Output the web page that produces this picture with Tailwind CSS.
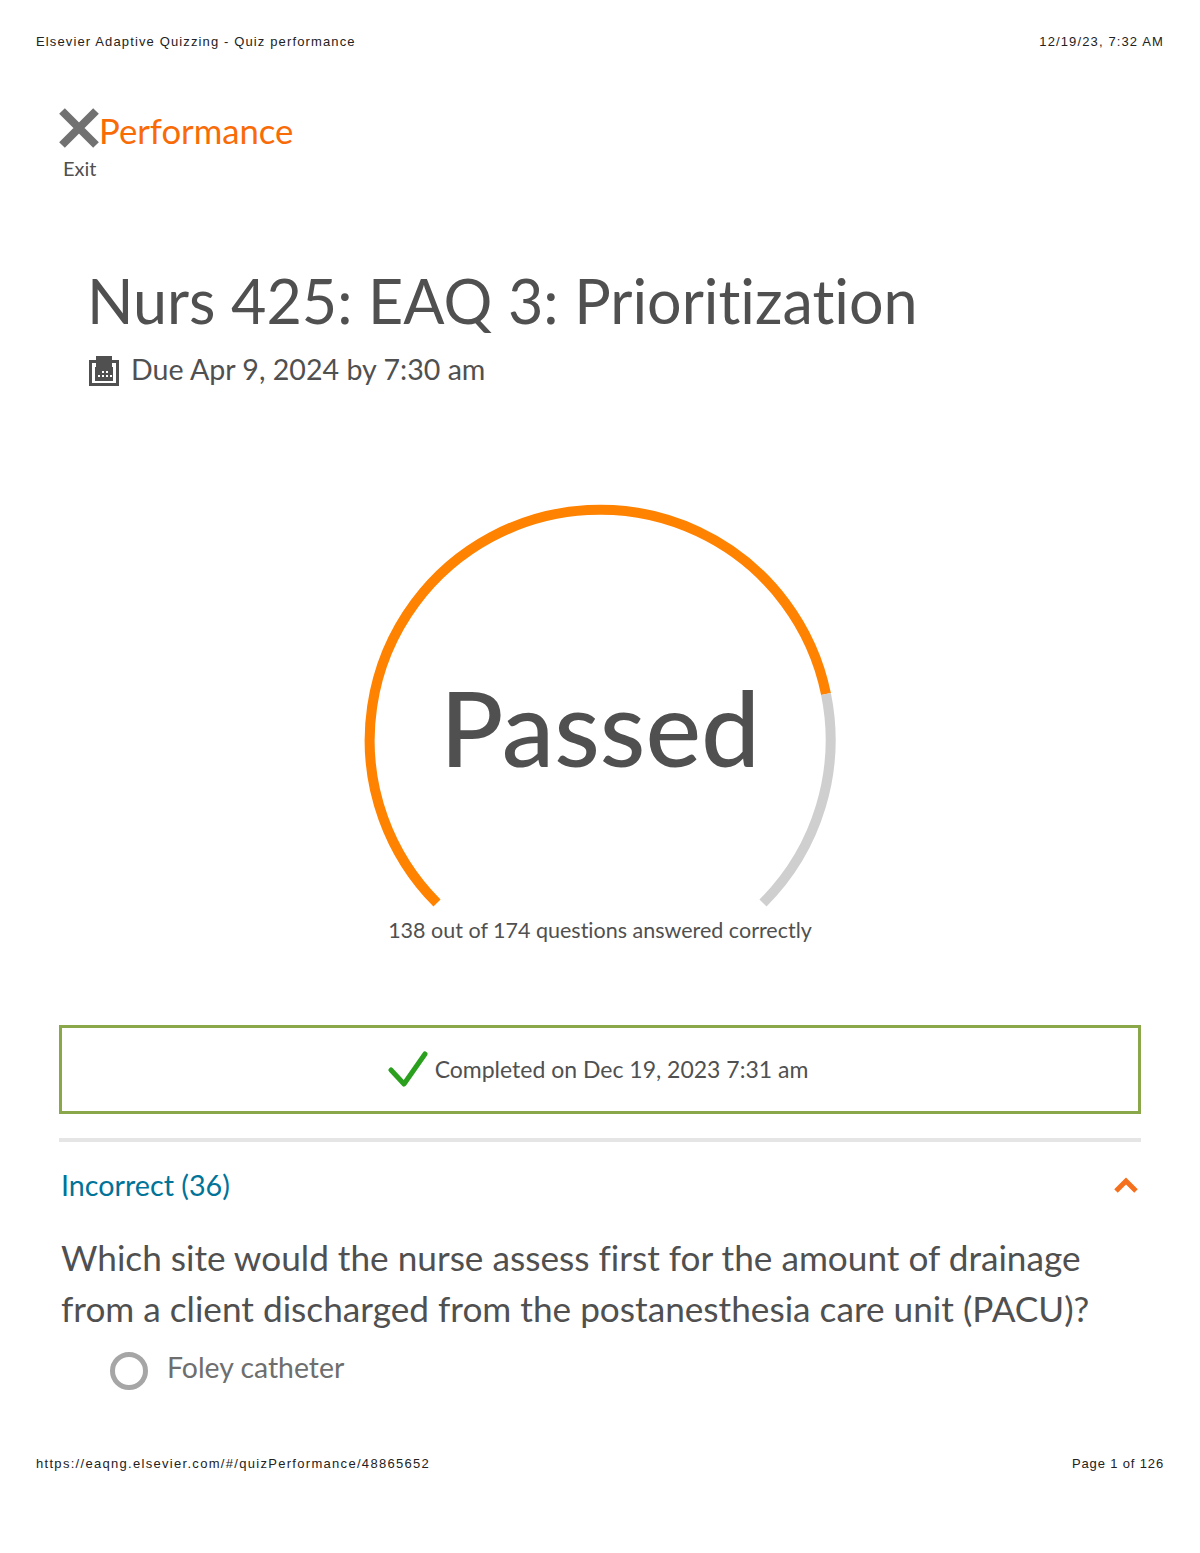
<!DOCTYPE html>
<html lang="en">
  <head>
    <meta charset="UTF-8" />
    <title>Elsevier Adaptive Quizzing - Quiz performance</title>
    <script src="https://cdn.jsdelivr.net/npm/@tailwindcss/browser@4"></script>
  </head>
  <body class="bg-white text-[#505050] font-['Lato','Liberation_Sans',sans-serif] [font-variant-ligatures:none]">
    <div class="h-[1553px] w-[1200px] overflow-hidden flex flex-col">
      <!-- print header -->
      <div class="flex justify-between px-[36px] pt-[34px] h-[108px] text-[13px] leading-[16px] text-[#222] font-['Liberation_Sans',sans-serif] tracking-[1.13px]">
        <span>Elsevier Adaptive Quizzing - Quiz performance</span>
        <span>12/19/23, 7:32 AM</span>
      </div>

      <!-- top bar -->
      <div class="pl-[59px] h-[165px]">
        <div class="flex items-center h-[40px]">
          <svg width="40" height="40" viewBox="0 0 40 40" class="shrink-0">
            <path d="M3 3 L37 37 M37 3 L3 37" stroke="#717171" stroke-width="8" fill="none" />
          </svg>
          <span class="text-[34.7px] leading-[40px] text-[#f96b07] pt-[6px]">Performance</span>
        </div>
        <div class="pl-[4px] mt-[7px] text-[20px] leading-[26px]">Exit</div>
      </div>

      <!-- title -->
      <div class="pl-[89px] h-[231px]">
        <h1 class="text-[61px] leading-[72px] font-normal h-[72px] -mt-[8px] -ml-[2px]">Nurs 425: EAQ 3: Prioritization</h1>
        <div class="flex items-center gap-[12px] mt-[12px] h-[40px]">
          <svg width="30" height="30" viewBox="0 0 30 30" class="shrink-0 mt-[4px]">
            <path fill="#505050" fill-rule="evenodd" d="M0 4h7V0h16v4h7v26H0z M3 7v20h24V7h-4v4H7V7z" />
            <path fill="#505050" d="M6 11h18v14H6z" />
            <path fill="#fff" d="M9 19h2v2H9zM13 19h2v2h-2zM17 19h2v2h-2zM21 19h2v2h-2zM13 15h2v2h-2zM17 15h2v2h-2z" />
          </svg>
          <span class="text-[28.6px] leading-[40px]">Due Apr 9, 2024 by 7:30 am</span>
        </div>
      </div>

      <!-- gauge -->
      <div class="relative w-[480px] h-[410px] mx-auto shrink-0 -mt-[4px]">
        <svg width="480" height="410" viewBox="0 0 480 410" fill="none" stroke-width="10">
          <path d="M77 403 A230.5 230.5 0 1 1 466 194" stroke="#ff8200" />
          <path d="M466 194 A230.5 230.5 0 0 1 403 403" stroke="#cfcfcf" />
        </svg>
        <div class="absolute inset-x-0 top-[156px] text-center text-[105px] leading-[140px] font-medium">Passed</div>
      </div>
      <p class="text-center text-[21.5px] leading-[30px] mt-[5px] h-[30px]">138 out of 174 questions answered correctly</p>

      <!-- completed -->
      <div class="mx-[59px] mt-[80px] h-[89px] border-[3px] border-[#8aa84a] flex items-center justify-center gap-[7px] pr-[4px]">
        <svg width="40" height="38" viewBox="0 0 40 38" fill="none" class="shrink-0">
          <path d="M3 19 L16 33 L37 3" stroke="#2ba01e" stroke-width="5" stroke-linecap="round" stroke-linejoin="round" />
        </svg>
        <span class="text-[23px] leading-[30px] -mt-[2px]">Completed on Dec 19, 2023 7:31 am</span>
      </div>
      <div class="mx-[59px] mt-[24px] h-[4px] bg-[#e5e5e5]"></div>

      <!-- incorrect list -->
      <div class="mx-[59px] mt-[25px] flex items-center justify-between h-[36px] pl-[2px] pr-[3px]">
        <span class="text-[28.7px] leading-[36px] text-[#007398]">Incorrect (36)</span>
        <svg width="24" height="16" viewBox="0 0 24 16" fill="none">
          <path d="M2 14 L12 4 L22 14" stroke="#f5701c" stroke-width="5" />
        </svg>
      </div>
      <p class="mx-[59px] pl-[2px] mt-[29px] text-[35.2px] leading-[51px] h-[102px]">Which site would the nurse assess first for the amount of drainage from a client discharged from the postanesthesia care unit (PACU)?</p>
      <div class="flex items-center ml-[110px] gap-[19px] mt-[17px] h-[40px]">
        <span class="size-[38px] rounded-full border-[5px] border-[#a6a6a6] shrink-0"></span>
        <span class="text-[28.4px] leading-[36px] -mt-[8px] text-[#6e6e6e]">Foley catheter</span>
      </div>

      <!-- print footer -->
      <div class="flex justify-between px-[36px] mt-[65px] text-[13px] leading-[16px] text-[#222] font-['Liberation_Sans',sans-serif] tracking-[1.3px]">
        <span>https://eaqng.elsevier.com/#/quizPerformance/48865652</span>
        <span class="tracking-[0.85px]">Page 1 of 126</span>
      </div>
    </div>
  </body>
</html>
